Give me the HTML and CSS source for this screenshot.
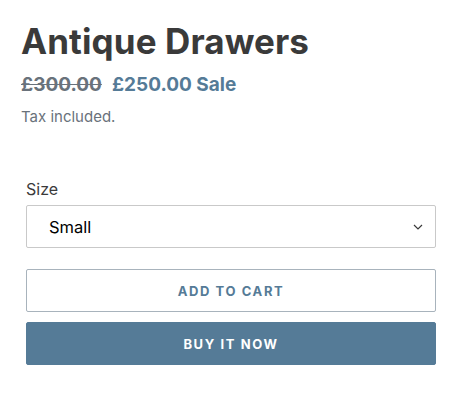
FILE: index.html
```html
<!DOCTYPE html>
<html lang="en">
<head>
    <meta charset="UTF-8">
    <meta name="viewport" content="width=device-width, initial-scale=1.0">
    <title>Antique Drawers</title>
    <link rel="stylesheet" href="styles.css">
</head>
<body>

    <!-- 상품 정보 -->
    <div class="product">
        <h1 class="title">Antique Drawers</h1>

        <!-- 가격 -->
        <div class="price">
            <s class="price-old">£300.00</s>
            <span class="price-sale">£250.00 Sale</span>
        </div>
        <p class="tax">Tax included.</p>

        <!-- 옵션 + 버튼 -->
        <form class="form">
            <label class="label" for="size">Size</label>
            <div class="select-wrap">
                <select id="size" class="select">
                    <option>Small</option>
                    <option>Medium</option>
                    <option>Large</option>
                </select>
                <svg class="chev" width="10" height="6" viewBox="0 0 10 6">
                    <path d="M1 1 L5 5 L9 1" fill="none" stroke="#3a3a3a" stroke-width="1.2"/>
                </svg>
            </div>

            <button type="button" class="btn btn-cart">Add to cart</button>
            <button type="button" class="btn btn-buy">Buy it now</button>
        </form>
    </div>

</body>
</html>
```

FILE: styles.css
```css
html,body{
    margin: 0;
    padding: 0;
}
body{
    background-color: #fff;
    font-family: Inter, "Open Sans", sans-serif;
    color: #3a3a3a;
}

.product{
    padding: 19px 0 0 21px;
}
.title{
    margin: 0;
    font-size: 35px;
    line-height: 44px;
    font-weight: 700;
    letter-spacing: 0.1px;
}

/* 가격줄 */
.price{
    margin-top: 10px;
    display: flex;
    gap: 10px;
    font-size: 19px;
    line-height: 24px;
    font-weight: 700;
}
.price-old{
    color: #69727b;
}
.price-sale{
    color: #557b97;
}
.tax{
    margin: 10px 0 0;
    font-size: 15px;
    line-height: 20px;
    color: #69727b;
}

/* 폼 */
.form{
    display: flex;
    flex-direction: column;
    width: 410px;
    margin: 52px 0 0 5px;
}
.label{
    font-size: 16px;
    line-height: 20px;
    margin-bottom: 6px;
}
.select-wrap{
    position: relative;
}
.select{
    appearance: none;
    display: block;
    width: 100%;
    height: 43px;
    padding: 0 22px;
    border: 1px solid #c9c9c9;
    border-radius: 2px;
    background-color: #fff;
    font-family: inherit;
    font-size: 16.5px;
    color: #000;
}
.chev{
    position: absolute;
    top: 19px;
    right: 13px;
}

/* 버튼 */
.btn{
    height: 43px;
    border-radius: 2px;
    font-family: inherit;
    font-size: 13px;
    font-weight: 700;
    letter-spacing: 1.6px;
    text-transform: uppercase;
}
.btn-cart{
    margin-top: 21px;
    border: 1px solid #a8b3bc;
    background-color: #fff;
    color: #557b97;
}
.btn-buy{
    margin-top: 10px;
    border: 1px solid #557b97;
    background-color: #557b97;
    color: #fff;
}
```
